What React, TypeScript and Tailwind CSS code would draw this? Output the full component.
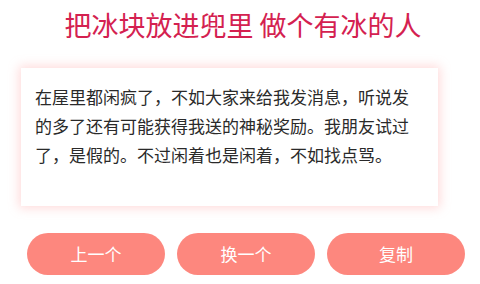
export default function App() {
  const font = { fontFamily: '"Noto Sans CJK SC", "Noto Sans", sans-serif' };
  return (
    <div className="w-[480px] h-[284px] bg-white overflow-hidden flex flex-col" style={font}>
      <h1 className="mt-[7px] h-[36px] leading-[36px] text-[27px] text-center text-[#d42150] pl-[6px]">
        把冰块放进兜里 做个有冰的人
      </h1>
      <div className="mt-[25px] ml-[21px] w-[417px] h-[138px] bg-white shadow-[0_0_10px_2px_rgba(255,150,150,0.35)] pt-[14px] px-[14px]">
        <p className="text-[17px] leading-[29px] text-[#2a2a2a]">
          在屋里都闲疯了，不如大家来给我发消息，听说发的多了还有可能获得我送的神秘奖励。我朋友试过了，是假的。不过闲着也是闲着，不如找点骂。
        </p>
      </div>
      <div className="mt-[27px] ml-[27px] flex gap-[12px]">
        {["上一个", "换一个", "复制"].map((t) => (
          <button
            key={t}
            className="w-[138px] h-[42px] rounded-full bg-[#fd877e] text-white text-[17px] flex items-center justify-center"
          >
            {t}
          </button>
        ))}
      </div>
    </div>
  );
}
